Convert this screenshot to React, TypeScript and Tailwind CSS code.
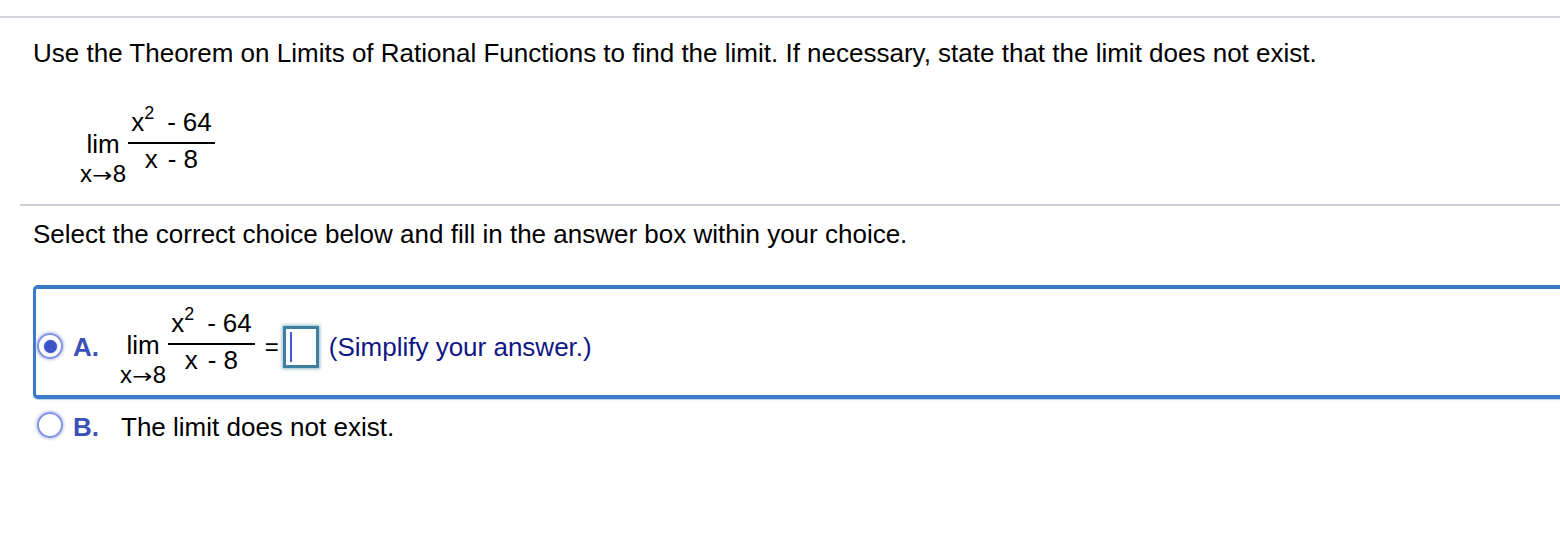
import React from "react";

function LimitExpr() {
  return (
    <div className="flex items-start text-[26px]">
      <div className="flex flex-col items-center mt-[22px]">
        <span className="leading-[26px] h-[26px]">lim</span>
        <span className="text-[24px] leading-[24px] h-[24px] mt-[5px] flex items-baseline whitespace-nowrap">
          <span>x</span>
          <span className="inline-block font-['DejaVu_Sans',sans-serif] text-[20px] scale-x-[1.2] mx-[2px]">→</span>
          <span>8</span>
        </span>
      </div>
      <div className="flex flex-col items-stretch ml-[2px]">
        <div className="h-[26px] leading-[26px] pl-[3px] pr-[3px] flex items-baseline whitespace-nowrap">
          <span>x</span>
          <sup className="text-[18px] top-[-12px]">2</sup>
          <span className="ml-[13px]">-</span>
          <span className="ml-[7px]">64</span>
        </div>
        <div className="h-[2px] bg-black mt-[7px]" />
        <div className="h-[26px] leading-[26px] mt-[2px] flex items-baseline justify-center whitespace-nowrap">
          <span>x</span>
          <span className="ml-[10px]">-</span>
          <span className="ml-[7px]">8</span>
        </div>
      </div>
    </div>
  );
}

function Radio({ checked }: { checked?: boolean }) {
  return (
    <div className="w-[26px] h-[26px] rounded-full border-[2px] border-[#8293e2] flex items-center justify-center shadow-[0_0_3px_1px_rgba(130,148,228,0.55)] shrink-0">
      {checked && <div className="w-[13px] h-[13px] rounded-full bg-[#3b53c9] shadow-[0_0_2px_rgba(59,83,201,0.6)]" />}
    </div>
  );
}

export default function App() {
  return (
    <div className="w-[1560px] h-[552px] bg-white overflow-hidden text-black text-[26px] font-['Liberation_Sans',Arial,sans-serif]">
      <div className="h-[16px]" />
      <div className="h-[2px] bg-[#d3d6df]" />
      <div className="pl-[33px] pt-[20px] leading-[30px]">
        Use the Theorem on Limits of Rational Functions to find the limit. If necessary, state that the limit does not exist.
      </div>
      <div className="pl-[80px] pt-[41px]">
        <LimitExpr />
      </div>
      <div className="ml-[20px] mt-[18px] h-[2px] bg-[#cdd0dc]" />
      <div className="pl-[33px] pt-[13px] leading-[30px]">
        Select the correct choice below and fill in the answer box within your choice.
      </div>
      <div className="mt-[36px] ml-[33px] border-l-[3px] border-t-[4px] border-b-[4px] border-[#3a7bc8] rounded-l-[5px] h-[114px] flex items-start shadow-[0_1px_1px_rgba(58,123,200,0.35)]">
        <div className="ml-[1px] mt-[44px]">
          <Radio checked />
        </div>
        <span className="ml-[10px] mt-[43px] leading-[30px] font-bold text-[#3b50b8] w-[47px]">A.</span>
        <div className="mt-[21px] flex items-start">
          <LimitExpr />
          <div className="mt-[16px] h-[42px] flex items-center">
            <span className="ml-[10px] text-[24px] leading-[24px]">=</span>
            <div className="ml-[4px] w-[36px] h-[42px] border-[3px] border-[#3f7f9f] bg-white shadow-[0_0_3px_1px_rgba(63,127,159,0.55)] flex items-center pl-[4px]">
              <div className="w-[2px] h-[30px] bg-[#3d5cd6]" />
            </div>
            <span className="ml-[10px] leading-[30px] text-[#111685] whitespace-nowrap">(Simplify your answer.)</span>
          </div>
        </div>
      </div>
      <div className="ml-[37px] mt-[13px] flex items-start">
        <Radio />
        <span className="ml-[10px] leading-[30px] font-bold text-[#3b50b8] w-[48px]">B.</span>
        <span className="leading-[30px]">The limit does not exist.</span>
      </div>
    </div>
  );
}
